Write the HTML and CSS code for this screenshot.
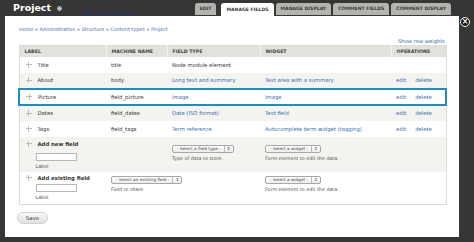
FILE: index.html
```html
<!DOCTYPE html>
<html lang="en">
<head>
    <meta charset="UTF-8">
    <title>Project | Manage fields</title>
    <link rel="stylesheet" href="styles.css">
</head>
<body>
    <div class="top">
        <div class="title">
            Project
            <span class="shortcut"></span>
        </div>
        <div class="behind">Projects</div>
        <ul class="tabs">
            <li class="tab tab-edit">EDIT</li>
            <li class="tab active">MANAGE FIELDS</li>
            <li class="tab">MANAGE DISPLAY</li>
            <li class="tab">COMMENT FIELDS</li>
            <li class="tab">COMMENT DISPLAY</li>
        </ul>
    </div>

    <div class="panel">
        <span class="close">&times;</span>
        <div class="crumbs">
            <a>Home</a> » <a>Administration</a> » <a>Structure</a> » <a>Content types</a> » <a>Project</a>
        </div>
        <div class="weights"><a>Show row weights</a></div>

        <table class="fields">
            <colgroup>
                <col class="c-label">
                <col class="c-machine">
                <col class="c-type">
                <col class="c-widget">
                <col class="c-ops">
            </colgroup>
            <thead>
                <tr>
                    <th>LABEL</th>
                    <th>MACHINE NAME</th>
                    <th>FIELD TYPE</th>
                    <th>WIDGET</th>
                    <th>OPERATIONS</th>
                </tr>
            </thead>
            <tbody>
                <tr>
                    <td><span class="drag"></span>Title</td>
                    <td>title</td>
                    <td>Node module element</td>
                    <td></td>
                    <td></td>
                </tr>
                <tr class="even">
                    <td><span class="drag"></span>About</td>
                    <td>body</td>
                    <td><a>Long text and summary</a></td>
                    <td><a>Text area with a summary</a></td>
                    <td><a class="op">edit</a><a>delete</a></td>
                </tr>
                <tr class="focus">
                    <td><span class="drag"></span>Picture</td>
                    <td>field_picture</td>
                    <td><a>Image</a></td>
                    <td><a>Image</a></td>
                    <td><a class="op">edit</a><a>delete</a></td>
                </tr>
                <tr class="even">
                    <td><span class="drag"></span>Dates</td>
                    <td>field_dates</td>
                    <td><a>Date (ISO format)</a></td>
                    <td><a>Text field</a></td>
                    <td><a class="op">edit</a><a>delete</a></td>
                </tr>
                <tr>
                    <td><span class="drag"></span>Tags</td>
                    <td>field_tags</td>
                    <td><a>Term reference</a></td>
                    <td><a>Autocomplete term widget (tagging)</a></td>
                    <td><a class="op">edit</a><a>delete</a></td>
                </tr>
                <tr class="even add add-new">
                    <td>
                        <div class="add-title"><span class="drag"></span>Add new field</div>
                        <div class="field"><span class="input"></span><span class="hint">Label</span></div>
                    </td>
                    <td></td>
                    <td>
                        <div class="field"><span class="select">- Select a field type -</span><span class="hint">Type of data to store.</span></div>
                    </td>
                    <td>
                        <div class="field"><span class="select">- Select a widget -</span><span class="hint">Form element to edit the data.</span></div>
                    </td>
                    <td></td>
                </tr>
                <tr class="add add-existing">
                    <td>
                        <div class="add-title"><span class="drag"></span>Add existing field</div>
                        <div class="field"><span class="input"></span><span class="hint">Label</span></div>
                    </td>
                    <td colspan="2">
                        <div class="field"><span class="select">- Select an existing field -</span><span class="hint">Field to share</span></div>
                    </td>
                    <td>
                        <div class="field"><span class="select">- Select a widget -</span><span class="hint">Form element to edit the data.</span></div>
                    </td>
                    <td></td>
                </tr>
            </tbody>
        </table>

        <button class="save">Save</button>
    </div>
</body>
</html>
```

FILE: styles.css
```css
:root {
    --link-color: #3a6eb5;
    --text-color: #333;
    --overlay: #363636;
    --tab-color: #b4b4ae;
    --header-bg: #e2e2dc;
    --even-bg: #f3f3ef;
    --focus-color: #1f8dbf;
}

* {
    margin: 0;
    padding: 0;
    box-sizing: border-box;
}

body {
    background: var(--overlay);
    font-family: "DejaVu Sans", Verdana, sans-serif;
    color: var(--text-color);
    height: 242px;
    overflow: hidden;
}

a {
    color: var(--link-color);
}

/* top bar */
.top {
    position: relative;
    display: flex;
    align-items: flex-end;
    height: 16px;
    padding: 0 23px 0 13px;
}

.title {
    align-self: flex-start;
    display: flex;
    align-items: center;
    gap: 6px;
    margin-top: 2px;
    color: #fff;
    font-size: 9.5px;
    font-weight: bold;
}

.shortcut {
    width: 5px;
    height: 5px;
    margin-top: 2px;
    border: 1px solid #ccc;
    border-radius: 50%;
    background: radial-gradient(circle, #ccc 0 1px, transparent 1.2px);
}

.behind {
    position: absolute;
    left: 83px;
    top: 9px;
    color: #2a3b55;
    font-size: 11px;
    font-weight: bold;
    z-index: 0;
}

.tabs {
    display: flex;
    gap: 2px;
    margin-left: auto;
    list-style: none;
    position: relative;
    z-index: 1;
}

.tab {
    height: 12px;
    line-height: 12px;
    padding: 0 5px;
    background: var(--tab-color);
    border-radius: 3px 3px 0 0;
    font-size: 4.6px;
    font-weight: bold;
    color: #3c3c3c;
}

.tab-edit {
    margin-right: 3px;
}

.tab.active {
    height: 13px;
    line-height: 14px;
    background: #fff;
}

/* panel */
.panel {
    position: relative;
    z-index: 1;
    height: 221px;
    margin: 0 15px 0 5px;
    padding: 9px 14px 0 13px;
    background: #fff;
}

.close {
    position: absolute;
    top: 1px;
    right: -11px;
    width: 10px;
    height: 10px;
    border: 1px solid #fff;
    border-radius: 50%;
    background: #111;
    color: #fff;
    font-size: 8px;
    font-weight: bold;
    line-height: 7px;
    text-align: center;
}

.crumbs {
    height: 8px;
    padding-left: 1px;
    font-size: 4.9px;
    line-height: 8px;
    color: #555;
}

.weights {
    height: 8px;
    margin-top: 4px;
    text-align: right;
    font-size: 5.2px;
    line-height: 8px;
}

/* table */
.fields {
    width: 427px;
    table-layout: fixed;
    border-collapse: collapse;
    border: 1px solid #dcdcd6;
    font-size: 5.3px;
}

.c-label { width: 87px; }
.c-machine { width: 61px; }
.c-type { width: 93px; }
.c-widget { width: 131px; }
.c-ops { width: 55px; }

.fields th {
    height: 11px;
    padding: 0 5px;
    background: var(--header-bg);
    border-left: 1px solid #f2f2ee;
    text-align: left;
    font-size: 4.7px;
    font-weight: bold;
    color: #444;
}

.fields th:first-child {
    border-left: none;
}

.fields td {
    height: 16px;
    padding: 0 5px;
    white-space: nowrap;
    vertical-align: middle;
}

.fields tr.even td {
    background: var(--even-bg);
}

.fields tr.focus td {
    border-top: 2px solid var(--focus-color);
    border-bottom: 2px solid var(--focus-color);
}

.fields tr.focus td:first-child {
    border-left: 2px solid var(--focus-color);
}

.fields tr.focus td:last-child {
    border-right: 2px solid var(--focus-color);
}

.drag {
    display: inline-block;
    width: 6px;
    height: 6px;
    margin: 0 6px 0 1px;
    vertical-align: -1px;
    background:
        linear-gradient(#bbb, #bbb) center / 6px 1px no-repeat,
        linear-gradient(#bbb, #bbb) center / 1px 6px no-repeat;
}

.op {
    margin-right: 9px;
}

/* add rows */
.fields tr.add td {
    vertical-align: top;
}

.add-new td {
    height: 35px;
    padding-top: 3px;
}

.add-existing td {
    height: 33px;
    padding-top: 2px;
}

.add-title {
    height: 8px;
    line-height: 8px;
    font-weight: bold;
}

.field {
    display: flex;
    flex-direction: column;
    align-items: flex-start;
    gap: 3px;
    margin-top: 5px;
}

.fields td:first-child .field {
    padding-left: 11px;
}

.add-existing .field {
    margin-top: 2px;
}

.input {
    width: 41px;
    height: 8px;
    border: 1px solid #b8b8b8;
    background: #fff;
}

.select {
    position: relative;
    height: 8px;
    padding: 0 12px 0 4px;
    border: 1px solid #a8a8a8;
    border-radius: 2px;
    background: linear-gradient(#fff, #ececec);
    font-size: 4.2px;
    line-height: 6px;
    color: #444;
}

.select::after {
    content: "\21D5";
    position: absolute;
    top: 0;
    right: 0;
    width: 8px;
    height: 6px;
    border-left: 1px solid #bbb;
    text-align: center;
    font-size: 4.5px;
    line-height: 6px;
}

.hint {
    font-size: 4.8px;
    line-height: 6px;
    color: #555;
}

/* save */
.save {
    margin: 7px 0 0 -1px;
    width: 31px;
    height: 12px;
    border: 1px solid #d0d0d0;
    border-radius: 6px;
    background: linear-gradient(#f7f7f7, #e0e0e0);
    font-family: inherit;
    font-size: 5.5px;
    color: #444;
}
```
